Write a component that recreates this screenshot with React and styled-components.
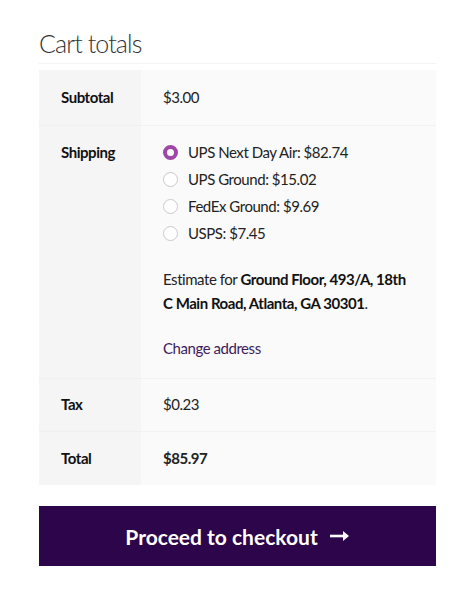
import React from "react";
import styled, { createGlobalStyle } from "styled-components";

const Global = createGlobalStyle`
  html, body { margin: 0; padding: 0; background: #fff; }
  body { font-family: Lato, "Noto Sans", sans-serif; color: #1e1e1e; }
`;

const Page = styled.div`
  padding: 27px 38px 0 39px;
  width: 397px;
`;

const Title = styled.h2`
  margin: 0;
  font-weight: 300;
  font-size: 25px;
  letter-spacing: -0.9px;
  line-height: 32px;
  color: #333;
  padding-bottom: 4px;
  border-bottom: 1px solid #f3f3f3;
`;

const Table = styled.div`
  margin-top: 6px;
  display: grid;
  grid-template-columns: 102px 1fr;
  font-size: 15px;
  letter-spacing: -0.45px;
`;

const Label = styled.div`
  background: #f5f5f5;
  padding: ${p => p.$pad || "19px 0 19px 22px"};
  font-weight: 700;
  line-height: 17px;
  color: #111;
  border-top: ${p => (p.$first ? "none" : "1px solid #f0f0f0")};
`;

const Value = styled.div`
  background: #fafafa;
  padding: ${p => p.$pad || "19px 22px 19px 22px"};
  line-height: 17px;
  color: #222;
  font-weight: ${p => (p.$bold ? 700 : 400)};
  border-top: ${p => (p.$first ? "none" : "1px solid #f2f2f2")};
`;

const RadioList = styled.ul`
  list-style: none;
  margin: 0;
  padding: 0;
  display: flex;
  flex-direction: column;
  gap: 9px;
`;

const RadioItem = styled.li`
  display: flex;
  align-items: center;
  gap: 10px;
  line-height: 18px;
  color: #222;
`;

const Radio = styled.span`
  width: 15px;
  height: 15px;
  border-radius: 50%;
  box-sizing: border-box;
  flex: none;
  background: #fff;
  border: ${p => (p.$checked ? "4.5px solid #a046a8" : "1px solid #c9c9c9")};
`;

const Estimate = styled.p`
  margin: 25px 0 0;
  line-height: 24px;
  color: #222;
  strong { font-weight: 700; color: #111; }
`;

const Change = styled.a`
  display: block;
  margin-top: 21px;
  line-height: 24px;
  color: #3d1c5e;
  text-decoration: none;
`;

const Button = styled.button`
  margin-top: 21px;
  width: 100%;
  height: 60px;
  border: none;
  background: #2c054b;
  color: #fff;
  font-family: Lato, "Noto Sans", sans-serif;
  font-weight: 700;
  font-size: 21px;
  display: flex;
  align-items: center;
  justify-content: center;
  gap: 12px;
  cursor: pointer;
`;

const Arrow = styled.svg`
  width: 20px;
  height: 12px;
`;

const options = [
  { label: "UPS Next Day Air: $82.74", checked: true },
  { label: "UPS Ground: $15.02" },
  { label: "FedEx Ground: $9.69" },
  { label: "USPS: $7.45" },
];

export default function App() {
  return (
    <>
      <Global />
      <Page>
        <Title>Cart totals</Title>
        <Table>
          <Label $first>Subtotal</Label>
          <Value $first>$3.00</Value>
          <Label $pad="18px 0 0 22px">Shipping</Label>
          <Value $pad="17px 22px 18px 22px">
            <RadioList>
              {options.map(o => (
                <RadioItem key={o.label}>
                  <Radio $checked={o.checked} />
                  {o.label}
                </RadioItem>
              ))}
            </RadioList>
            <Estimate>
              Estimate for <strong>Ground Floor, 493/A, 18th C Main Road, Atlanta, GA 30301</strong>.
            </Estimate>
            <Change href="#">Change address</Change>
          </Value>
          <Label $pad="17px 0 18px 22px">Tax</Label>
          <Value $pad="17px 22px 18px 22px">$0.23</Value>
          <Label $pad="18px 0 18px 22px">Total</Label>
          <Value $pad="18px 22px 18px 22px" $bold>$85.97</Value>
        </Table>
        <Button>
          Proceed to checkout
          <Arrow viewBox="0 0 20 12">
            <path d="M0 6h16" stroke="#fff" strokeWidth="2.6" />
            <path d="M13 1l6 5-6 5z" fill="#fff" />
          </Arrow>
        </Button>
      </Page>
    </>
  );
}
